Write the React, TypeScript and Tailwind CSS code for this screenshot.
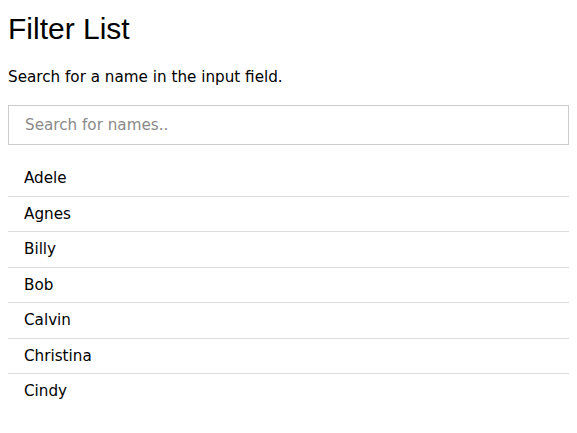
import { useState } from 'react';

const NAMES = ['Adele', 'Agnes', 'Billy', 'Bob', 'Calvin', 'Christina', 'Cindy'];

export default function App() {
  const [query, setQuery] = useState('');
  const shown = NAMES.filter((n) => n.toLowerCase().includes(query.toLowerCase()));

  return (
    <div className="min-h-screen bg-white px-2 pt-[12px] text-black [font-family:'DejaVu_Sans',sans-serif]">
      <h1 className="text-[30px] leading-[34px] font-normal [font-family:'Liberation_Sans',Arial,sans-serif]">
        Filter List
      </h1>
      <p className="mt-[23px] text-[15.2px] leading-[17.5px]">Search for a name in the input field.</p>
      <input
        type="text"
        value={query}
        onChange={(e) => setQuery(e.target.value)}
        placeholder="Search for names.."
        className="mt-[18.5px] block h-10 w-full border border-[#cccccc] px-4 text-[15.2px] outline-none placeholder:text-[#8a8a8a]"
      />
      <ul className="mt-[16px]">
        {shown.map((n, i) => (
          <li
            key={n}
            className={
              i < shown.length - 1
                ? 'border-b border-[#dddddd] px-4 py-2 text-[15.2px] leading-[18.5px]'
                : 'px-4 py-2 text-[15.2px] leading-[18.5px]'
            }
          >
            {n}
          </li>
        ))}
      </ul>
    </div>
  );
}
